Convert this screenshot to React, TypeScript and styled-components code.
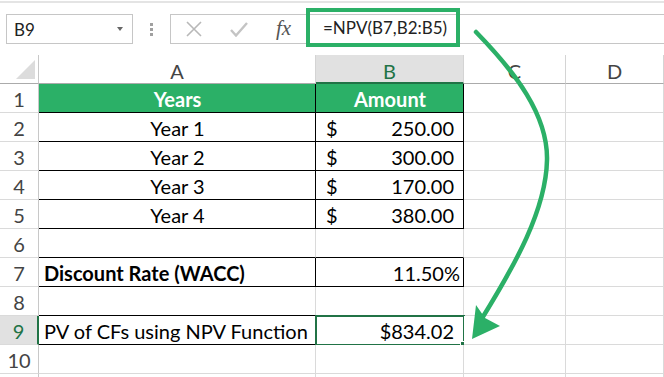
import styled, { createGlobalStyle } from 'styled-components';

const GREEN = '#2bb067';
const DARK = '#217346';
const GRID = '#dadada';

const GlobalStyle = createGlobalStyle`
  html, body { margin: 0; padding: 0; background: #fff; }
  body { font-family: Lato, "Noto Sans", sans-serif; }
`;

const Page = styled.div`
  position: relative;
  width: 664px;
  height: 377px;
  overflow: hidden;
  padding-top: 1px;
  box-sizing: border-box;
  background: #fff;
`;

const TopLine = styled.div`
  height: 2px;
  background: #e4e4e4;
`;

const FormulaBar = styled.div`
  display: flex;
  align-items: flex-start;
  height: 52px;
  padding: 11px 0 0 6px;
  box-sizing: border-box;
`;

const NameBox = styled.div`
  width: 127px;
  height: 30px;
  box-sizing: border-box;
  border: 1px solid #c6c6c6;
  display: flex;
  align-items: center;
  justify-content: space-between;
  padding: 0 9px 0 7px;
  font-size: 17px;
  color: #222;
`;

const Caret = styled.span`
  width: 0;
  height: 0;
  border-left: 3px solid transparent;
  border-right: 3px solid transparent;
  border-top: 4px solid #666;
`;

const Grip = styled.div`
  width: 37px;
  display: flex;
  flex-direction: column;
  align-items: center;
  gap: 2px;
  padding-top: 9px;
`;

const Dot = styled.span`
  width: 3px;
  height: 3px;
  background: #a0a0a0;
`;

const FnBox = styled.div`
  width: 136px;
  height: 30px;
  box-sizing: border-box;
  border: 1px solid #c6c6c6;
  border-right: none;
  display: flex;
  align-items: center;
`;

const FnButton = styled.div`
  width: 45px;
  display: flex;
  justify-content: center;
  align-items: center;
`;

const FxLabel = styled.span`
  font-family: "Liberation Serif", serif;
  font-style: italic;
  font-size: 21px;
  color: #555;
  line-height: 1;
  margin-top: -2px;
`;

const FormulaInput = styled.div`
  flex: 1;
  height: 30px;
  box-sizing: border-box;
  border-top: 1px solid #c6c6c6;
  border-bottom: 1px solid #c6c6c6;
  display: flex;
  align-items: flex-start;
`;

const Highlight = styled.div`
  width: 154px;
  height: 39px;
  flex-shrink: 0;
  margin-top: -7px;
  box-sizing: border-box;
  border: 4px solid ${GREEN};
  display: flex;
  align-items: center;
  padding-left: 13px;
  font-size: 17px;
  color: #222;
`;

const Sheet = styled.div`
  display: grid;
  grid-template-columns: 39px 277px 148px 102px 98px;
  grid-auto-rows: 29px;
  font-size: 20px;
  line-height: 1;
`;

const Corner = styled.div`
  position: relative;
  border-right: 1px solid #c8c8c8;
  border-bottom: 1px solid #ababab;
  &::after {
    content: "";
    position: absolute;
    right: 3px;
    bottom: 4px;
    width: 19px;
    height: 19px;
    background: #dcdcdc;
    clip-path: polygon(100% 0, 100% 100%, 0 100%);
  }
`;

const ColHead = styled.div<{ $active?: boolean }>`
  display: flex;
  align-items: flex-end;
  justify-content: center;
  padding-bottom: ${p => (p.$active ? 1 : 2)}px;
  box-sizing: border-box;
  background: ${p => (p.$active ? '#e1e1e1' : '#fff')};
  color: ${p => (p.$active ? DARK : '#444')};
  border-right: 1px solid #d4d4d4;
  border-bottom: ${p => (p.$active ? `2px solid ${DARK}` : '1px solid #ababab')};
`;

const RowHead = styled.div<{ $active?: boolean }>`
  display: flex;
  align-items: flex-end;
  justify-content: center;
  padding-bottom: 3px;
  box-sizing: border-box;
  background: ${p => (p.$active ? '#e1e1e1' : '#fff')};
  color: ${p => (p.$active ? DARK : '#444')};
  border-right: ${p => (p.$active ? `2px solid ${DARK}` : '1px solid #c8c8c8')};
  border-bottom: 1px solid ${GRID};
`;

type CellProps = {
  $align?: 'left' | 'center' | 'right';
  $bold?: boolean;
  $fill?: boolean;
  $edgeR?: boolean;
  $edgeB?: boolean;
  $pl?: number;
  $pr?: number;
};

const Cell = styled.div<CellProps>`
  position: relative;
  display: flex;
  align-items: flex-end;
  justify-content: ${p =>
    p.$align === 'center' ? 'center' : p.$align === 'right' ? 'flex-end' : 'flex-start'};
  padding: 0 ${p => p.$pr ?? 4}px 3px ${p => p.$pl ?? 5}px;
  box-sizing: border-box;
  border-right: 1px solid ${p => (p.$edgeR ? '#000' : GRID)};
  border-bottom: 1px solid ${p => (p.$edgeB ? '#000' : GRID)};
  background: ${p => (p.$fill ? GREEN : '#fff')};
  color: ${p => (p.$fill ? '#fff' : '#000')};
  font-weight: ${p => (p.$bold ? 700 : 400)};
  white-space: nowrap;
`;

const Money = styled(Cell)`
  justify-content: space-between;
`;

const Selection = styled.div`
  position: absolute;
  left: -1px;
  top: -1px;
  right: -2px;
  bottom: -2px;
  border: 2px solid ${DARK};
  pointer-events: none;
  &::after {
    content: "";
    position: absolute;
    right: -3px;
    bottom: -3px;
    width: 5px;
    height: 5px;
    background: ${DARK};
    outline: 1px solid #fff;
  }
`;

const ArrowLayer = styled.svg`
  position: absolute;
  left: 0;
  top: 0;
  pointer-events: none;
`;

const years = [
  ['Year 1', '250.00'],
  ['Year 2', '300.00'],
  ['Year 3', '170.00'],
  ['Year 4', '380.00'],
];

const Blank = ({ b }: { b?: boolean }) => <Cell $edgeB={b} />;

export default function App() {
  return (
    <Page>
      <GlobalStyle />
      <TopLine />
      <FormulaBar>
        <NameBox>
          <span>B9</span>
          <Caret />
        </NameBox>
        <Grip>
          <Dot />
          <Dot />
          <Dot />
        </Grip>
        <FnBox>
          <FnButton>
            <svg width="16" height="16" viewBox="0 0 16 16">
              <path d="M1 1 L15 15 M15 1 L1 15" stroke="#b8b8b8" strokeWidth="1.6" fill="none" />
            </svg>
          </FnButton>
          <FnButton>
            <svg width="18" height="15" viewBox="0 0 18 15">
              <path d="M1 8 L6 13.5 L17 1" stroke="#c4c4c4" strokeWidth="2.4" fill="none" />
            </svg>
          </FnButton>
          <FnButton>
            <FxLabel>fx</FxLabel>
          </FnButton>
        </FnBox>
        <FormulaInput>
          <Highlight>=NPV(B7,B2:B5)</Highlight>
        </FormulaInput>
      </FormulaBar>

      <Sheet>
        <Corner />
        <ColHead>A</ColHead>
        <ColHead $active>B</ColHead>
        <ColHead>C</ColHead>
        <ColHead>D</ColHead>

        <RowHead>1</RowHead>
        <Cell $fill $bold $align="center" $edgeR $edgeB>Years</Cell>
        <Cell $fill $bold $align="center" $edgeR $edgeB>Amount</Cell>
        <Blank />
        <Blank />

        {years.map(([label, amount], i) => (
          <>
            <RowHead key={`h${i}`}>{i + 2}</RowHead>
            <Cell key={`a${i}`} $align="center" $edgeR $edgeB>{label}</Cell>
            <Money key={`b${i}`} $edgeR $edgeB $pl={10} $pr={9}>
              <span>$</span>
              <span>{amount}</span>
            </Money>
            <Blank key={`c${i}`} />
            <Blank key={`d${i}`} />
          </>
        ))}

        <RowHead>6</RowHead>
        <Blank b />
        <Blank b />
        <Blank />
        <Blank />

        <RowHead>7</RowHead>
        <Cell $bold $edgeR $edgeB>Discount Rate (WACC)</Cell>
        <Cell $align="right" $edgeR $edgeB $pr={3}>11.50%</Cell>
        <Blank />
        <Blank />

        <RowHead>8</RowHead>
        <Blank b />
        <Blank b />
        <Blank />
        <Blank />

        <RowHead $active>9</RowHead>
        <Cell $edgeR $edgeB>PV of CFs using NPV Function</Cell>
        <Cell $align="right" $pr={9}>
          $834.02
          <Selection />
        </Cell>
        <Blank />
        <Blank />

        <RowHead>10</RowHead>
        <Blank />
        <Blank />
        <Blank />
        <Blank />

        <RowHead />
        <Blank />
        <Blank />
        <Blank />
        <Blank />
      </Sheet>

      <ArrowLayer width="664" height="377" viewBox="0 0 664 377">
        <path
          d="M476 32 C515 72 548 115 547 160 C546 210 515 265 481 320"
          stroke={GREEN}
          strokeWidth="4.5"
          strokeLinecap="round"
          fill="none"
        />
        <polygon points="472,339 476,305 485,318 500,326" fill={GREEN} />
      </ArrowLayer>
    </Page>
  );
}
